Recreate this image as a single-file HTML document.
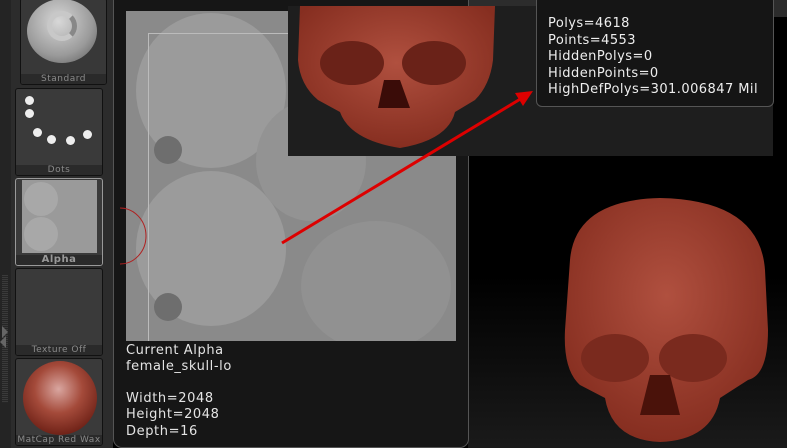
<!DOCTYPE html>
<html><head><style>
*{margin:0;padding:0;box-sizing:border-box}
body{width:787px;height:448px;overflow:hidden;background:#000;position:relative;font-family:"DejaVu Sans","Liberation Sans",sans-serif}
.a{position:absolute}
.th{position:absolute;background:#3a3a3a;border:1px solid #111;border-radius:3px;overflow:hidden}
.lb{position:absolute;left:0;right:0;bottom:0;height:10px;background:#2a2a2a;color:#8a8a8a;font-size:9px;text-align:center;line-height:10px;letter-spacing:0.5px}
.t{position:absolute;left:126px;color:#e4e4e4;font-size:13px;line-height:16.3px;letter-spacing:0.6px}
.info{position:absolute;left:548px;top:16px;color:#eee;font-size:13px;line-height:16.5px;letter-spacing:0.45px}
</style></head><body>
<div class="a" style="left:0;top:0;width:113px;height:448px;background:#2c2c2c"></div>
<div class="a" style="left:0;top:0;width:11px;height:448px;background:#242424"></div>
<div class="a" style="left:2px;top:275px;width:6px;height:128px;background:repeating-linear-gradient(#3a3a3a 0 1px,#262626 1px 2px)"></div>
<div class="a" style="left:2px;top:326px;width:0;height:0;border-top:6px solid transparent;border-bottom:6px solid transparent;border-left:6px solid #666"></div>
<div class="a" style="left:0;top:336px;width:0;height:0;border-top:6px solid transparent;border-bottom:6px solid transparent;border-right:6px solid #666"></div>
<div class="a" style="left:468px;top:0;width:319px;height:17px;background:#2c2c2c"></div>
<div class="a" style="left:468px;top:17px;width:319px;height:431px;background:linear-gradient(#000,#000 60%,#1a1a1a)"></div>

<div class="th" style="left:20px;top:-2px;width:87px;height:87px;background:#383838">
<div class="a" style="left:6px;top:0;width:70px;height:64px;border-radius:50%;background:radial-gradient(circle at 45% 35%,#d8d8d8,#9a9a9a 60%,#555)"></div>
<div class="a" style="left:26px;top:12px;width:30px;height:30px;border-radius:50%;border:5px solid #c8c8c8;border-right-color:#888"></div>
<div class="lb">Standard</div></div>
<div class="th" style="left:15px;top:88px;width:88px;height:88px">
<div class="a" style="left:9px;top:7px;width:9px;height:9px;border-radius:50%;background:#eee"></div>
<div class="a" style="left:9px;top:20px;width:9px;height:9px;border-radius:50%;background:#eee"></div>
<div class="a" style="left:17px;top:39px;width:9px;height:9px;border-radius:50%;background:#eee"></div>
<div class="a" style="left:31px;top:46px;width:9px;height:9px;border-radius:50%;background:#eee"></div>
<div class="a" style="left:50px;top:47px;width:9px;height:9px;border-radius:50%;background:#eee"></div>
<div class="a" style="left:67px;top:41px;width:9px;height:9px;border-radius:50%;background:#eee"></div>
<div class="lb">Dots</div></div>
<div class="th" style="left:15px;top:178px;width:88px;height:88px;border-color:#999">
<div class="a" style="left:6px;top:1px;width:75px;height:73px;background:#9a9a9a"></div>
<div class="a" style="left:8px;top:3px;width:34px;height:34px;border-radius:50%;background:#a8a8a8"></div>
<div class="a" style="left:8px;top:38px;width:34px;height:34px;border-radius:50%;background:#a8a8a8"></div>
<div class="lb" style="color:#999;font-weight:bold;font-size:10px">Alpha</div></div>
<div class="th" style="left:15px;top:268px;width:88px;height:88px"><div class="lb">Texture Off</div></div>
<div class="th" style="left:15px;top:358px;width:88px;height:88px">
<div class="a" style="left:7px;top:2px;width:74px;height:74px;border-radius:50%;background:radial-gradient(circle at 48% 38%,#d9a6a0,#a44a3a 40%,#6a1e14 80%)"></div>
<div class="lb">MatCap Red Wax</div></div>

<div class="a" style="left:113px;top:-10px;width:356px;height:458px;background:#161616;border:1px solid #555;border-radius:9px"></div>
<div class="a" style="left:126px;top:11px;width:330px;height:330px;background:#8a8a8a;overflow:hidden">
<div class="a" style="left:10px;top:2px;width:150px;height:155px;border-radius:50%;background:#9b9b9b"></div>
<div class="a" style="left:10px;top:160px;width:150px;height:155px;border-radius:50%;background:#9b9b9b"></div>
<div class="a" style="left:130px;top:90px;width:110px;height:120px;border-radius:50%;background:#939393"></div>
<div class="a" style="left:175px;top:210px;width:150px;height:130px;border-radius:50%;background:#919191"></div>
<div class="a" style="left:28px;top:125px;width:28px;height:28px;border-radius:50%;background:#6e6e6e"></div>
<div class="a" style="left:28px;top:282px;width:28px;height:28px;border-radius:50%;background:#6e6e6e"></div>
<div class="a" style="left:22px;top:22px;width:1px;height:320px;background:#bbb"></div>
<div class="a" style="left:22px;top:22px;width:320px;height:1px;background:#bbb"></div>
</div>
<div class="t" style="top:343px">Current Alpha<br>female_skull-lo</div>
<div class="t" style="top:391px">Width=2048<br>Height=2048<br>Depth=16</div>

<div class="a" style="left:288px;top:6px;width:485px;height:150px;background:#1e1e1e"></div>
<div class="a" style="left:536px;top:-5px;width:238px;height:112px;border:1px solid #555;border-radius:6px;background:#151515"></div>
<div class="info">Polys=4618<br>Points=4553<br>HiddenPolys=0<br>HiddenPoints=0<br>HighDefPolys=301.006847 Mil</div>

<svg class="a" style="left:0;top:0" width="787" height="448">
<defs><radialGradient id="sk" cx="50%" cy="40%" r="60%"><stop offset="0" stop-color="#b0503f"/><stop offset="1" stop-color="#862e20"/></radialGradient></defs>
<g>
<path d="M300 6 L495 6 L493 60 Q490 85 475 100 L455 112 Q448 140 400 148 Q350 140 340 112 L318 100 Q300 85 298 60 Z" fill="url(#sk)"/>
<ellipse cx="352" cy="63" rx="32" ry="22" fill="#6a2218"/>
<ellipse cx="434" cy="63" rx="32" ry="22" fill="#6a2218"/>
<path d="M384 80 L400 80 L410 108 L378 108 Z" fill="#3a0c08"/>
</g>
<g>
<path d="M570 260 Q575 200 660 198 Q760 200 765 270 L768 330 Q768 375 748 380 L720 398 Q712 440 660 442 Q612 440 605 398 L580 385 Q563 370 565 330 Z" fill="url(#sk)"/>
<ellipse cx="615" cy="358" rx="34" ry="24" fill="#7a2a1e"/>
<ellipse cx="693" cy="358" rx="34" ry="24" fill="#7a2a1e"/>
<path d="M650 375 L670 375 L680 415 L640 415 Z" fill="#4a120a"/>
</g>
<path d="M120 208 A26 28 0 0 1 120 264" stroke="#b02020" fill="none"/>
<line x1="282" y1="243" x2="522" y2="98" stroke="#d00" stroke-width="3"/>
<path d="M533 91 L515 93 L523 106 Z" fill="#d00"/>
</svg>
</body></html>
